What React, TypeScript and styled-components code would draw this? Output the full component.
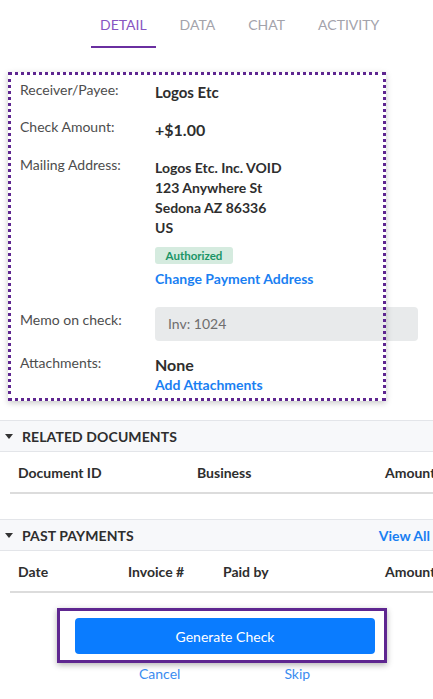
import React from "react";
import styled, { createGlobalStyle } from "styled-components";

const GlobalStyle = createGlobalStyle`
  html, body {
    margin: 0;
    padding: 0;
    background: #fff;
    overflow-x: hidden;
  }
  body {
    font-family: "Lato", "Liberation Sans", sans-serif;
    color: #333;
  }
`;

const Page = styled.div`
  width: 433px;
  overflow: hidden;
`;

const TabBar = styled.div`
  display: flex;
  gap: 15px;
  height: 48px;
  padding-left: 91px;
`;

const Tab = styled.div<{ $active?: boolean }>`
  padding: 0 9px;
  font-size: 14px;
  height: 46px;
  line-height: 50px;
  color: ${(p) => (p.$active ? "#8755c2" : "#a3a3ab")};
  border-bottom: 2px solid ${(p) => (p.$active ? "#6a2fa0" : "transparent")};
`;

const Details = styled.div`
  position: relative;
  margin-top: 24px;
  padding: 8px 15px 8px 0;
  &::after {
    content: "";
    position: absolute;
    top: 0;
    bottom: 0;
    left: 8px;
    right: 47px;
    border: 3px dotted #5e2690;
    box-shadow: 0 2px 6px rgba(0, 0, 0, 0.22);
    pointer-events: none;
  }
`;

const Row = styled.div<{ $gap?: number }>`
  display: flex;
  margin-bottom: ${(p) => p.$gap ?? 0}px;
`;

const Label = styled.div<{ $top?: number }>`
  width: 135px;
  padding-left: 20px;
  flex-shrink: 0;
  font-size: 14px;
  line-height: 20px;
  color: #4d4d4d;
  margin-top: ${(p) => p.$top ?? 0}px;
`;

const Value = styled.div`
  flex: 1;
  display: flex;
  flex-direction: column;
  align-items: flex-start;
`;

const Strong = styled.div<{ $size?: number; $lh?: number }>`
  font-size: ${(p) => p.$size ?? 14}px;
  line-height: ${(p) => p.$lh ?? 20}px;
  font-weight: 700;
  color: #2e2e2e;
`;

const Address = styled.div`
  padding-top: 3px;
  font-size: 14px;
  line-height: 20px;
  font-weight: 700;
  color: #2e2e2e;
`;

const Badge = styled.span`
  margin-top: 9px;
  height: 17px;
  width: 78px;
  box-sizing: border-box;
  border-radius: 3px;
  background: #d5ebdf;
  color: #1b9566;
  font-size: 11.5px;
  font-weight: 700;
  line-height: 17px;
  text-align: center;
`;

const Link = styled.a<{ $lh?: number; $top?: number }>`
  display: block;
  color: #1a7ff2;
  font-size: 14px;
  font-weight: 700;
  line-height: ${(p) => p.$lh ?? 20}px;
  margin-top: ${(p) => p.$top ?? 0}px;
  text-decoration: none;
  cursor: pointer;
`;

const MemoInput = styled.div`
  width: 100%;
  height: 34px;
  box-sizing: border-box;
  border-radius: 4px;
  background: #e8eaeb;
  padding-left: 13px;
  font-size: 14px;
  line-height: 34px;
  color: #6e6e6e;
`;

const SectionBar = styled.div<{ $top: number }>`
  margin-top: ${(p) => p.$top}px;
  height: 30px;
  display: flex;
  align-items: center;
  background: #f7f8fa;
  border-top: 1px solid #e3e5e9;
  border-bottom: 1px solid #e3e5e9;
  padding-right: 3px;
`;

const Caret = styled.svg`
  width: 8px;
  height: 5px;
  margin: 0 9px 0 5px;
`;

const SectionTitle = styled.div`
  flex: 1;
  font-size: 14px;
  font-weight: 700;
  color: #2e2e2e;
  letter-spacing: 0.1px;
`;

const ViewAll = styled.a`
  color: #1a7ff2;
  font-size: 14px;
  font-weight: 700;
  cursor: pointer;
`;

const TableHead = styled.div<{ $cols: string }>`
  display: grid;
  grid-template-columns: ${(p) => p.$cols};
  width: 480px;
  margin-left: 10px;
  height: 40px;
  align-items: center;
  border-bottom: 2px solid #dcdcdc;
`;

const Th = styled.div`
  padding-left: 8px;
  font-size: 14px;
  font-weight: 700;
  color: #2e2e2e;
  white-space: nowrap;
`;

const Actions = styled.div`
  display: flex;
  flex-direction: column;
  align-items: center;
  margin-top: 15px;
  padding-left: 11px;
`;

const Highlight = styled.div`
  width: 330px;
  box-sizing: border-box;
  border: 3px solid #5e2690;
  padding: 7px 9px 6px 15px;
  box-shadow: 0 2px 6px rgba(0, 0, 0, 0.3);
`;

const PrimaryButton = styled.button`
  display: block;
  width: 300px;
  height: 36px;
  border: none;
  border-radius: 4px;
  background: #0a7cff;
  color: #fff;
  font-family: inherit;
  font-size: 14px;
  cursor: pointer;
`;

const SecondaryRow = styled.div`
  display: flex;
  width: 330px;
  padding-left: 82px;
  box-sizing: border-box;
  gap: 104px;
  margin-top: 2px;
`;

const TextButton = styled.a`
  color: #3a8cf0;
  font-size: 14px;
  line-height: 18px;
  cursor: pointer;
`;

function CaretIcon() {
  return (
    <Caret viewBox="0 0 8 5">
      <polygon points="0,0 8,0 4,5" fill="#333" />
    </Caret>
  );
}

export default function App() {
  return (
    <Page>
      <GlobalStyle />
      <TabBar>
        <Tab $active>DETAIL</Tab>
        <Tab>DATA</Tab>
        <Tab>CHAT</Tab>
        <Tab>ACTIVITY</Tab>
      </TabBar>

      <Details>
        <Row $gap={13}>
          <Label>Receiver/Payee:</Label>
          <Value>
            <Strong $size={15} $lh={24}>Logos Etc</Strong>
          </Value>
        </Row>
        <Row $gap={12}>
          <Label>Check Amount:</Label>
          <Value>
            <Strong $size={16} $lh={26}>+$1.00</Strong>
          </Value>
        </Row>
        <Row $gap={18}>
          <Label>Mailing Address:</Label>
          <Value>
            <Address>
              Logos Etc. Inc. VOID
              <br />
              123 Anywhere St
              <br />
              Sedona AZ 86336
              <br />
              US
            </Address>
            <Badge>Authorized</Badge>
            <Link $top={5}>Change Payment Address</Link>
          </Value>
        </Row>
        <Row $gap={12}>
          <Label $top={3}>Memo on check:</Label>
          <Value>
            <MemoInput>Inv: 1024</MemoInput>
          </Value>
        </Row>
        <Row>
          <Label>Attachments:</Label>
          <Value>
            <Strong $size={16} $lh={24}>None</Strong>
            <Link $lh={16}>Add Attachments</Link>
          </Value>
        </Row>
      </Details>

      <SectionBar $top={19}>
        <CaretIcon />
        <SectionTitle>RELATED DOCUMENTS</SectionTitle>
      </SectionBar>
      <TableHead $cols="179px 188px 1fr">
        <Th>Document ID</Th>
        <Th>Business</Th>
        <Th>Amount</Th>
      </TableHead>

      <SectionBar $top={25}>
        <CaretIcon />
        <SectionTitle>PAST PAYMENTS</SectionTitle>
        <ViewAll>View All</ViewAll>
      </SectionBar>
      <TableHead $cols="110px 95px 162px 1fr">
        <Th>Date</Th>
        <Th>Invoice #</Th>
        <Th>Paid by</Th>
        <Th>Amount</Th>
      </TableHead>

      <Actions>
        <Highlight>
          <PrimaryButton>Generate Check</PrimaryButton>
        </Highlight>
        <SecondaryRow>
          <TextButton>Cancel</TextButton>
          <TextButton>Skip</TextButton>
        </SecondaryRow>
      </Actions>
    </Page>
  );
}
